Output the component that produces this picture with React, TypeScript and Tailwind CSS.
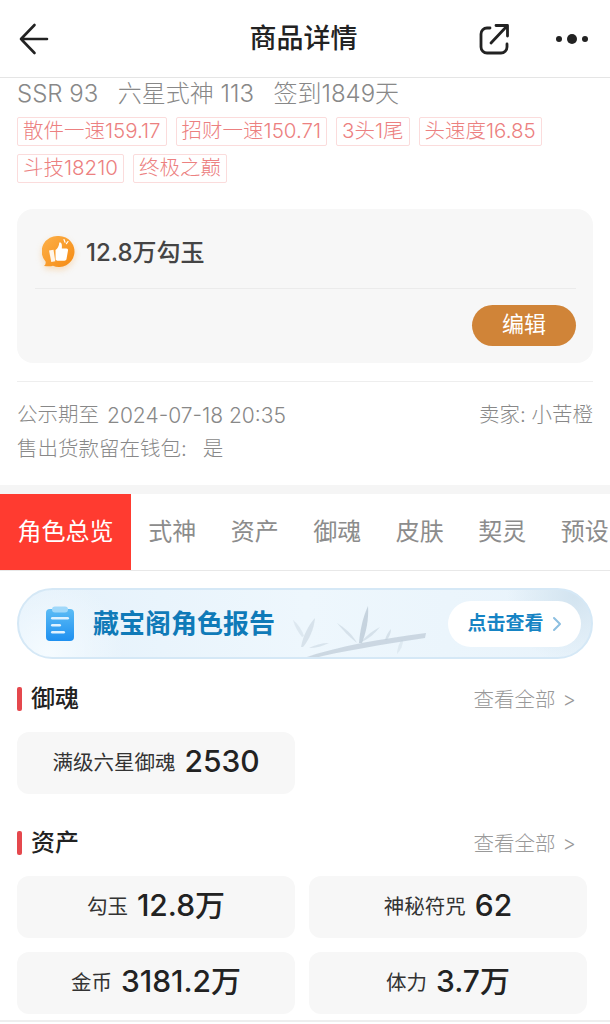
import React from "react";

const tags = [
  ["散件一速159.17", "招财一速150.71", "3头1尾", "头速度16.85"],
  ["斗技18210", "终极之巅"],
];

const tabs = ["式神", "资产", "御魂", "皮肤", "契灵", "预设"];

function Tag({ text }: { text: string }) {
  return (
    <span className="flex h-[29px] items-center rounded-[2px] border border-[#fbdcdc] px-[5px] text-[20.500px] leading-none font-light whitespace-nowrap text-[#ec8080]">
      {text}
    </span>
  );
}

function SectionTitle({ title }: { title: string }) {
  return (
    <div className="flex h-[30px] items-center justify-between pr-[17px]">
      <div className="flex items-center gap-[9px]">
        <span className="h-[24px] w-[5px] rounded-[2px] bg-[#e5484d]" />
        <span className="text-[24px] leading-none font-medium text-[#222]">{title}</span>
      </div>
      <span className="flex items-center gap-[7px] pt-[2px] text-[20.500px] leading-none font-light text-[#999]">
        查看全部 <span>&gt;</span>
      </span>
    </div>
  );
}

function Stat({ label, value }: { label: string; value: string }) {
  return (
    <div className="flex h-[62px] items-center justify-center gap-[9px] rounded-[12px] bg-[#f7f7f7]">
      <span className="text-[20.500px] leading-none text-[#333]">{label}</span>
      <span className="pb-[4px] text-[30px] leading-none font-medium text-[#222]">{value}</span>
    </div>
  );
}

function ThumbIcon() {
  return (
    <svg width="34" height="36" viewBox="0 0 34 36" className="drop-shadow-[0_3px_3px_rgba(245,160,50,0.3)]">
      <defs>
        <linearGradient id="thumbBg" x1="0" y1="0" x2="1" y2="1">
          <stop offset="0" stopColor="#fdb14a" />
          <stop offset="1" stopColor="#f58a12" />
        </linearGradient>
      </defs>
      <path d="M17 1a15.500 15.500 0 1 1-6 29.800c-2 .6-5 .8-9 .2 1.200-1 1.800-2.300 1.700-4.200A15.500 15.500 0 0 1 17 1z" fill="url(#thumbBg)" />
      <path d="M7 15.500l4.500-.8 1.800 11.500-4 .9z" fill="#fff" opacity="0.9" />
      <path d="M13.500 15c2.200-1.500 3.500-4 3.800-7.500 2-.4 3 1.200 2.500 6h4.700c1.100 0 1.700.9 1.500 2l-1.500 8.500c-.2 1.100-1 1.700-2.100 1.700h-7.200l-1.600-1z" fill="#fff" />
      <path d="M22 4.500l1 2.700M26 6.500l-1.600 2.200" stroke="#fff" strokeWidth="1.200" strokeLinecap="round" />
    </svg>
  );
}

function ReportIcon() {
  return (
    <svg width="30" height="36" viewBox="0 0 30 36">
      <defs>
        <linearGradient id="reportBg" x1="0" y1="0" x2="0" y2="1">
          <stop offset="0" stopColor="#5cbcf5" />
          <stop offset="1" stopColor="#1e90f0" />
        </linearGradient>
      </defs>
      <rect x="1" y="3" width="28" height="32" rx="4" fill="url(#reportBg)" />
      <rect x="7" y="0.500" width="16" height="6" rx="3" fill="#9fd8fa" />
      <rect x="6" y="11" width="18" height="2.500" rx="1.200" fill="#dff2ff" />
      <rect x="6" y="18" width="10" height="2.500" rx="1.200" fill="#dff2ff" />
      <rect x="6" y="25" width="14" height="2.500" rx="1.200" fill="#dff2ff" />
    </svg>
  );
}

function Bamboo() {
  return (
    <svg width="170" height="70" viewBox="0 0 170 70" className="absolute top-0 left-[262px] opacity-80 blur-[0.6px]" fill="#b4c3d0">
      <path d="M30 69c30-8 70-14 114-21l1-5c-45 6-85 12-125 26z" opacity="0.75" />
      <path d="M78 53c1-13 4-26 9-37 1 13-2 27-6 37z" opacity="0.85" />
      <path d="M76 53C68 47 62 40 56 33c8 5 15 11 20 20z" opacity="0.5" />
      <path d="M80 52c5-6 11-11 19-15-5 6-11 12-19 15z" opacity="0.5" />
      <path d="M20 57c2-11 7-21 14-29-1 11-6 22-12 29z" opacity="0.5" />
      <path d="M21 47c-4-5-7-10-9-17 5 4 9 10 11 16z" opacity="0.35" />
      <path d="M28 58c6-3 12-5 20-5-6 3-13 5-20 5z" opacity="0.45" />
      <path d="M104 50c1-4 3-8 6-11 0 4-2 8-4 11z" opacity="0.5" />
      <path d="M122 50c0 5-2 10-6 14 0-5 2-10 4-14z" opacity="0.3" />
    </svg>
  );
}

export default function App() {
  return (
    <div
      className="h-[1024px] w-[610px] overflow-hidden bg-white"
      style={{ fontFamily: '"Inter", "Noto Sans CJK SC", sans-serif' }}
    >
      <header className="flex h-[78px] items-center border-b border-[#e5e5e5] pr-[22px] pl-[19px]">
        <div className="flex flex-1">
          <svg width="30" height="32" viewBox="0 0 30 32" fill="none" stroke="#222" strokeWidth="2.600" strokeLinecap="round" strokeLinejoin="round">
            <path d="M15.500 2 2 16l13.500 14M2 16h26" />
          </svg>
        </div>
        <h1 className="text-[27px] leading-none font-medium text-[#222]">商品详情</h1>
        <div className="flex flex-1 items-center justify-end gap-[47px]">
          <svg width="30" height="32" viewBox="0 0 30 32" fill="none" stroke="#222" strokeWidth="2.800" strokeLinecap="round" strokeLinejoin="round">
            <path d="M11 5H8a6 6 0 0 0-6 6v13a6 6 0 0 0 6 6h14a6 6 0 0 0 6-6v-3" />
            <path d="M12 20 28 3M17 2.500h11.500V13" />
          </svg>
          <div className="flex items-center gap-[5px]">
            <span className="h-[6px] w-[6px] rounded-full bg-[#222]" />
            <span className="h-[10px] w-[10px] rounded-full bg-[#222]" />
            <span className="h-[6px] w-[6px] rounded-full bg-[#222]" />
          </div>
        </div>
      </header>

      <div className="px-[17px]">
        <div className="flex h-[32px] items-center gap-[19.500px] text-[24px] leading-none font-light whitespace-nowrap text-[#888]">
          <span>SSR 93</span>
          <span>六星式神 113</span>
          <span>签到1849天</span>
        </div>
        <div className="mt-[7px] flex flex-col gap-[8px]">
          {tags.map((row, i) => (
            <div key={i} className="flex gap-[9px]">
              {row.map((t) => (
                <Tag key={t} text={t} />
              ))}
            </div>
          ))}
        </div>

        <section className="mt-[26px] h-[154px] rounded-[16px] bg-[#f7f7f7] pr-[17px] pl-[18px]">
          <div className="flex h-[80px] items-center gap-[10px] border-b border-[#ebebeb] pt-[8px] pl-[7px]">
            <ThumbIcon />
            <span className="text-[24px] leading-none font-medium text-[#444]">12.8万勾玉</span>
          </div>
          <div className="mt-[16px] flex justify-end">
            <button className="h-[41px] w-[104px] rounded-full bg-[#d08438] pb-[3px] text-[22px] leading-none text-white">编辑</button>
          </div>
        </section>

        <div className="mt-[18px] border-t border-[#eee] pt-[20px] text-[20.500px] leading-none font-light text-[#888]">
          <div className="flex h-[26px] items-center justify-between">
            <span className="flex items-center gap-[8px]">
              公示期至 <span className="text-[21px]">2024-07-18 20:35</span>
            </span>
            <span>卖家: 小苦橙</span>
          </div>
          <div className="mt-[8px] flex h-[26px] items-center gap-[16px]">
            <span>售出货款留在钱包:</span>
            <span>是</span>
          </div>
        </div>
      </div>

      <div className="mt-[23px] h-[9px] bg-[#f5f5f5]" />

      <nav className="flex h-[77px] items-stretch overflow-hidden border-b border-[#e8e8e8]">
        <div className="flex w-[131px] shrink-0 items-center justify-center bg-[#ff3b30] text-[24px] leading-none text-[#fff]">角色总览</div>
        {tabs.map((t) => (
          <div key={t} className="flex w-[82.500px] shrink-0 items-center justify-center text-[24px] leading-none text-[#8c8c8c]">
            {t}
          </div>
        ))}
      </nav>

      <div className="px-[17px]">
        <div className="relative mt-[17px] flex h-[71px] w-[576px] items-center overflow-hidden rounded-full border-2 border-[#d5e8f6] bg-[radial-gradient(circle_at_5%_95%,#f5fbff_0,transparent_14%),radial-gradient(circle_at_97%_10%,#d3e4f0_0,transparent_12%),linear-gradient(90deg,#e4f1fb,#eef7fd_50%,#e8f3fb)] pr-[10px] pl-[26px]">
          <Bamboo />
          <ReportIcon />
          <span className="relative ml-[18px] text-[26px] leading-none font-bold text-[#0f7ab8]">藏宝阁角色报告</span>
          <div className="relative ml-auto flex h-[46px] w-[133px] items-center justify-center gap-[8px] rounded-full bg-white">
            <span className="text-[19px] leading-none font-bold text-[#1684c4]">点击查看</span>
            <svg width="10" height="16" viewBox="0 0 10 16" fill="none" stroke="#8cbfe0" strokeWidth="2" strokeLinecap="round" strokeLinejoin="round">
              <path d="m2 2 6 6-6 6" />
            </svg>
          </div>
        </div>

        <div className="mt-[25px]">
          <SectionTitle title="御魂" />
        </div>
        <div className="mt-[18px] grid w-[570px] grid-cols-2 gap-x-[14px] gap-y-[14px]">
          <Stat label="满级六星御魂" value="2530" />
        </div>

        <div className="mt-[34px]">
          <SectionTitle title="资产" />
        </div>
        <div className="mt-[18px] grid w-[570px] grid-cols-2 gap-x-[14px] gap-y-[14px]">
          <Stat label="勾玉" value="12.8万" />
          <Stat label="神秘符咒" value="62" />
          <Stat label="金币" value="3181.2万" />
          <Stat label="体力" value="3.7万" />
        </div>
      </div>
      <div className="mt-[6px] h-[2px] bg-[#eee]" />
    </div>
  );
}
